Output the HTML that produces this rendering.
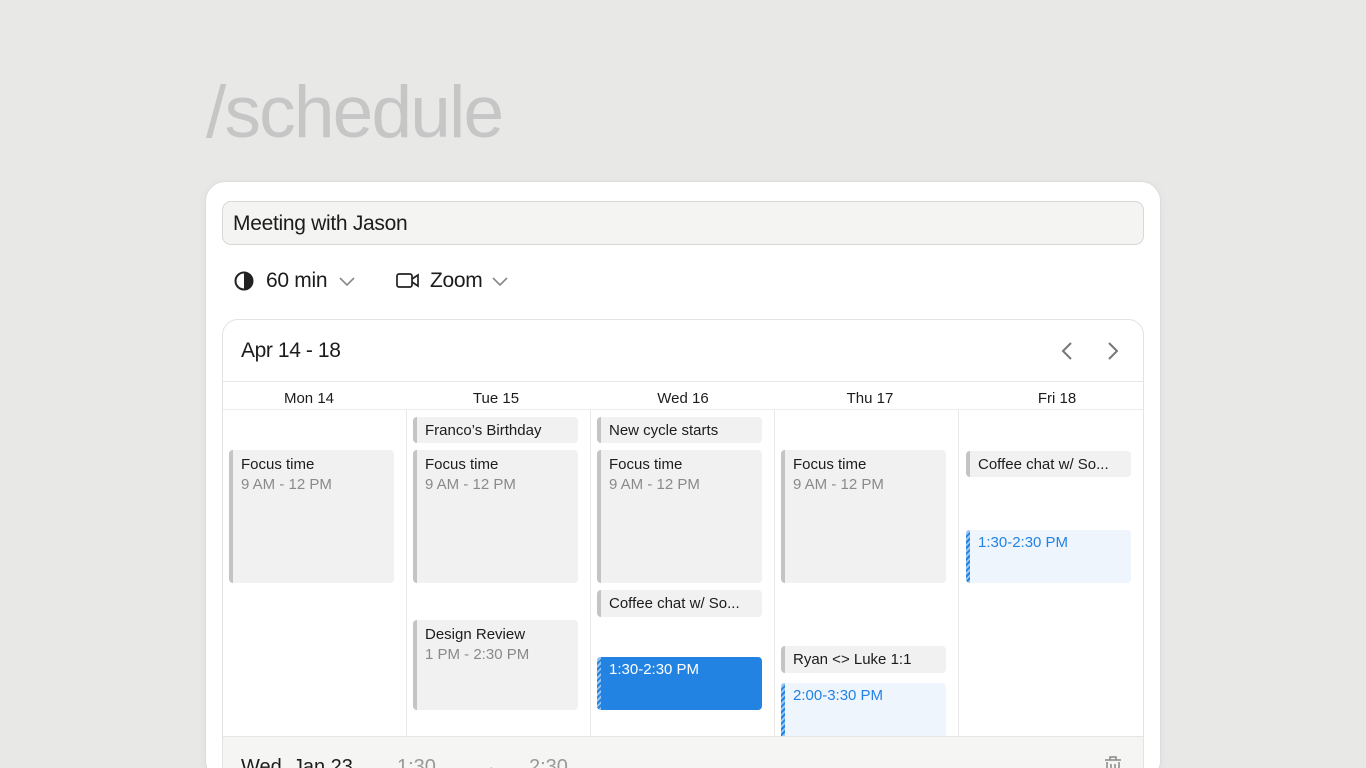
<!DOCTYPE html>
<html><head><meta charset="utf-8"><style>
*{margin:0;padding:0;box-sizing:border-box}
html,body{width:1366px;height:768px;overflow:hidden}
body{background:#e8e8e7;font-family:"Liberation Sans",sans-serif;position:relative;color:#1c1c1c}
.a{position:absolute}
.title{left:206px;top:72px;font-size:73px;color:#c6c6c6;letter-spacing:-1.8px;line-height:82px}
.card{left:205px;top:181px;width:956px;height:600px;background:#fff;border:1px solid #dcdcdc;border-radius:20px;box-shadow:0 2px 10px rgba(0,0,0,.04)}
.wrap{left:0;top:0;width:1366px;height:768px;overflow:hidden}
.inp{left:222px;top:201px;width:922px;height:44px;background:#f4f4f3;border:1px solid #d8d8d6;border-radius:9px;font-size:21px;padding-left:10px;line-height:43px;letter-spacing:-.3px}
.opt{top:268px;font-size:21px;line-height:26px;letter-spacing:-.3px}
.cal{left:222px;top:319px;width:922px;height:470px;border:1px solid #e3e3e3;border-radius:16px;overflow:hidden;background:#fff}
.hdr{left:0;top:0;width:100%;height:62px;border-bottom:1px solid #e6e6e6}
.days{left:0;top:62px;width:100%;height:28px;border-bottom:1px solid #ececec}
.dn{top:8px;font-size:15px;text-align:center;width:184px}
.col{top:90px;width:1px;height:330px;background:#e8e8e8}
.ev{position:absolute;background:#f1f1f1;border-radius:4px;border-left:4px solid #c4c4c4;font-size:15px;padding:5px 0 0 8px;line-height:20px;white-space:nowrap;overflow:hidden}
.ev .t{color:#8a8a8a}
.b1,.b2{border-left:none;padding-left:12px}
.b1{background:#2383e2;color:#fff}
.b2{background:#eef5fd;color:#2383e2}
.b1::before,.b2::before{content:"";position:absolute;left:0;top:0;bottom:0;width:4px;background:repeating-linear-gradient(135deg,#2383e2 0 2px,#9cc6f2 2px 4px)}
.bot{left:0;top:416px;width:100%;height:60px;background:#f5f5f4;border-top:1px solid #e6e6e6}
</style></head><body>
<div class="a wrap">
<div class="a title">/schedule</div>
<div class="a card"></div>
<div class="a inp">Meeting with Jason</div>
<svg class="a" style="left:233px;top:270px" width="22" height="22" viewBox="0 0 22 22"><circle cx="11" cy="11" r="8.5" fill="none" stroke="#222" stroke-width="2"/><path d="M11 2.5a8.5 8.5 0 0 1 0 17z" fill="#222"/></svg>
<div class="a opt" style="left:266px">60 min</div>
<svg class="a" style="left:338px;top:274px" width="18" height="14"><path d="M2 4l7 7 7-7" fill="none" stroke="#888" stroke-width="1.6"/></svg>
<svg class="a" style="left:396px;top:271px" width="26" height="20"><rect x="1" y="3" width="15" height="13" rx="2" fill="none" stroke="#222" stroke-width="1.7"/><path d="M16 8l6-4v11l-6-4" fill="none" stroke="#222" stroke-width="1.7"/></svg>
<div class="a opt" style="left:430px">Zoom</div>
<svg class="a" style="left:491px;top:274px" width="18" height="14"><path d="M2 4l7 7 7-7" fill="none" stroke="#888" stroke-width="1.6"/></svg>
<div class="a cal">
 <div class="a hdr"></div>
 <div class="a" style="left:18px;top:19px;font-size:21px;letter-spacing:-.4px">Apr 14 - 18</div>
 <svg class="a" style="left:836px;top:20px" width="16" height="22"><path d="M12 3l-8 8 8 8" fill="none" stroke="#777" stroke-width="2"/></svg>
 <svg class="a" style="left:882px;top:20px" width="16" height="22"><path d="M4 3l8 8-8 8" fill="none" stroke="#777" stroke-width="2"/></svg>
 <div class="a days"></div>
 <div class="a dn" style="left:-6px;top:70px">Mon 14</div>
 <div class="a dn" style="left:181px;top:70px">Tue 15</div>
 <div class="a dn" style="left:368px;top:70px">Wed 16</div>
 <div class="a dn" style="left:555px;top:70px">Thu 17</div>
 <div class="a dn" style="left:742px;top:70px">Fri 18</div>
 <div class="a col" style="left:183px"></div>
 <div class="a col" style="left:367px"></div>
 <div class="a col" style="left:551px"></div>
 <div class="a col" style="left:735px"></div>
 <div class="ev" style="left:6px;top:130px;width:165px;height:133px">Focus time<br><span class="t">9 AM - 12 PM</span></div>
 <div class="ev" style="left:190px;top:97px;width:165px;height:26px;padding-top:4px">Franco’s Birthday</div>
 <div class="ev" style="left:190px;top:130px;width:165px;height:133px">Focus time<br><span class="t">9 AM - 12 PM</span></div>
 <div class="ev" style="left:190px;top:300px;width:165px;height:90px">Design Review<br><span class="t">1 PM - 2:30 PM</span></div>
 <div class="ev" style="left:374px;top:97px;width:165px;height:26px;padding-top:4px">New cycle starts</div>
 <div class="ev" style="left:374px;top:130px;width:165px;height:133px">Focus time<br><span class="t">9 AM - 12 PM</span></div>
 <div class="ev" style="left:374px;top:270px;width:165px;height:27px;padding-top:4px">Coffee chat w/ So...</div>
 <div class="ev b1" style="left:374px;top:337px;width:165px;height:53px;padding-top:3px">1:30-2:30 PM</div>
 <div class="ev" style="left:558px;top:130px;width:165px;height:133px">Focus time<br><span class="t">9 AM - 12 PM</span></div>
 <div class="ev" style="left:558px;top:326px;width:165px;height:27px;padding-top:4px">Ryan &lt;&gt; Luke 1:1</div>
 <div class="ev b2" style="left:558px;top:363px;width:165px;height:60px;padding-top:3px">2:00-3:30 PM</div>
 <div class="ev" style="left:743px;top:131px;width:165px;height:26px;padding-top:4px">Coffee chat w/ So...</div>
 <div class="ev b2" style="left:743px;top:210px;width:165px;height:53px;padding-top:3px">1:30-2:30 PM</div>
 <div class="a bot"></div>
 <div class="a" style="left:18px;top:436px;font-size:20px">Wed, Jan 23</div>
 <div class="a" style="left:174px;top:436px;font-size:20px;color:#999">1:30</div>
 <div class="a" style="left:255px;top:436px;font-size:20px;color:#999">→</div>
 <div class="a" style="left:306px;top:436px;font-size:20px;color:#999">2:30</div>
 <svg class="a" style="left:880px;top:436px" width="20" height="20"><path d="M2 4h16M7 4V1h6v3M4 6v12h12V6M8 8v8M12 8v8" fill="none" stroke="#888" stroke-width="1.5"/></svg>
</div>
</div>
</body></html>
